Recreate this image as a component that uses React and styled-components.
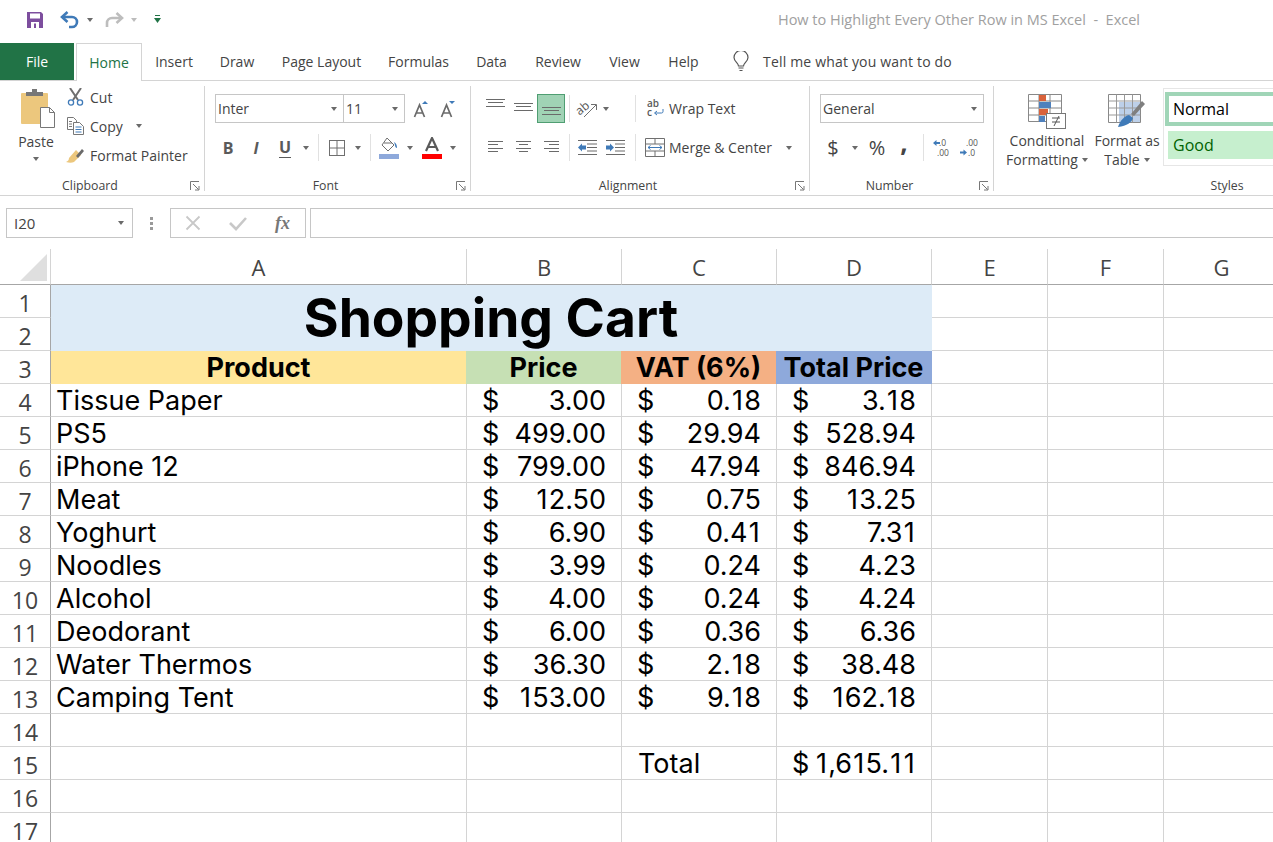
import React from 'react';
import styled, { createGlobalStyle } from 'styled-components';

const GlobalStyle = createGlobalStyle`
  html, body { margin: 0; padding: 0; background: #fff; }
  body { width: 1273px; height: 842px; overflow: hidden; font-family: "Open Sans", "Noto Sans", sans-serif; color: #444; }
`;

const Page = styled.div`
  width: 1273px;
  height: 842px;
  display: flex;
  flex-direction: column;
  overflow: hidden;
  & > * { flex: none; }
`;

/* title bar */
const TitleBar = styled.div`
  height: 43px;
  display: flex;
  align-items: center;
  justify-content: space-between;
  padding: 0 133px 4px 0;
  box-sizing: border-box;
`;
const QuickAccess = styled.div`
  display: flex;
  align-items: center;
  padding-left: 26px;
`;
const WindowTitle = styled.div`
  font-size: 14.5px;
  color: #a0a0a0;
  white-space: pre;
`;

/* tabs */
const TabBar = styled.div`
  height: 37px;
  display: flex;
  align-items: flex-start;
  border-bottom: 1px solid #d4d4d4;
  font-size: 14px;
`;
const FileTab = styled.div`
  width: 74px;
  height: 37px;
  margin-right: 2px;
  background: #217346;
  color: #fff;
  display: flex;
  align-items: center;
  justify-content: center;
`;
const Tab = styled.div`
  width: ${p => p.$w}px;
  height: 37px;
  display: flex;
  align-items: center;
  justify-content: center;
  white-space: nowrap;
  box-sizing: border-box;
  color: ${p => (p.$active ? '#217346' : '#444')};
  background: #fff;
  ${p => p.$active && `
    height: 38px;
    border: 1px solid #d4d4d4;
    border-bottom: none;
    z-index: 1;
  `}
`;
const TellMe = styled.div`
  height: 37px;
  display: flex;
  align-items: center;
  gap: 14px;
  margin-left: 20px;
  color: #444;
  white-space: nowrap;
  letter-spacing: 0.18px;
`;

/* ribbon */
const Ribbon = styled.div`
  height: 109px;
  display: flex;
  align-items: flex-start;
  padding-top: 5px;
  border-bottom: 1px solid #d4d4d4;
  font-size: 14px;
`;
const Group = styled.div`
  width: ${p => p.$w}px;
  height: 105px;
  display: grid;
  grid-template-rows: 87px 18px;
  flex: none;
  box-sizing: border-box;
  border-right: ${p => (p.$last ? 'none' : '1px solid #d4d4d4')};
`;
const GroupBody = styled.div`
  min-width: 0;
  padding: ${p => p.$pad || '8px 0 0 10px'};
  display: flex;
  flex-direction: ${p => (p.$row ? 'row' : 'column')};
  gap: ${p => (p.$row ? 0 : 10)}px;
`;
const GroupFooter = styled.div`
  display: grid;
  grid-template-columns: 1fr auto 1fr 20px;
  align-items: center;
  font-size: 12.3px;
  padding: 6px 4px 0 ${p => p.$pl || 0}px;
  color: #444;
`;
const GroupName = styled.span`
  grid-column: 2;
  line-height: 14px;
`;
const Launcher = styled.span`
  grid-column: 4;
  justify-self: end;
  display: flex;
`;
const ToolRow = styled.div`
  display: flex;
  align-items: center;
  height: 29px;
  font-size: ${p => (p.$big ? '20px' : 'inherit')};
`;
const Slot = styled.span`
  flex: none;
  width: ${p => p.$w}px;
  margin-left: ${p => p.$ml || 0}px;
  height: 29px;
  display: flex;
  align-items: ${p => (p.$pt !== undefined ? 'flex-start' : 'center')};
  justify-content: center;
  box-sizing: border-box;
  padding-top: ${p => p.$pt || 0}px;
  ${p => p.$active && 'background: #a0d3b5; border: 1px solid #4f9e72;'}
`;
const FontLetter = styled.span`
  font-size: 16px;
  line-height: 20px;
  font-weight: 700;
  color: #5a5a5a;
  font-style: ${p => (p.$italic ? 'italic' : 'normal')};
  border-bottom: ${p => (p.$under ? '1.500px solid #5a5a5a' : 'none')};
`;
const CommaGlyph = styled.span`
  font-size: 26px;
  font-weight: 700;
  line-height: 20px;
  margin-bottom: 12px;
`;
const ToolSep = styled.span`
  flex: none;
  width: 1px;
  height: 27px;
  margin-left: ${p => p.$ml}px;
  background: #e1e1e1;
`;
const Caret = styled.i`
  display: block;
  flex: none;
  width: 0;
  height: 0;
  margin-left: ${p => p.$ml || 0}px;
  margin-top: ${p => p.$mt || 0}px;
  opacity: ${p => (p.$faint ? 0.45 : 1)};
  border-left: 3.5px solid transparent;
  border-right: 3.5px solid transparent;
  border-top: 4px solid #6a6a6a;
`;
const Combo = styled.div`
  width: ${p => p.$w}px;
  height: 29px;
  flex: none;
  box-sizing: border-box;
  border: 1px solid #c6c6c6;
  margin-left: ${p => p.$ml || 0}px;
  padding: 0 6px 0 2px;
  display: flex;
  align-items: center;
  justify-content: space-between;
  font-size: 14px;
  color: #444;
`;
const TextTool = styled.span`
  display: flex;
  align-items: center;
  white-space: nowrap;
  margin-left: ${p => p.$ml || 0}px;
  gap: 4px;
`;

/* clipboard */
const PasteButton = styled.div`
  width: 56px;
  flex: none;
  padding-top: 3px;
  display: flex;
  flex-direction: column;
  align-items: center;
  padding-left: 8px;
  svg { margin-left: 5px; }
`;
const PasteLabel = styled.span`
  margin-top: 3px;
  line-height: 19px;
`;
const ClipList = styled.div`
  display: flex;
  flex-direction: column;
  gap: 5px;
  margin: -1px 0 0 2px;
`;
const ClipItem = styled.div`
  height: 24px;
  display: flex;
  align-items: center;
  gap: 5px;
  white-space: nowrap;
`;
const ClipIcon = styled.span`
  width: 19px;
  display: flex;
  justify-content: center;
`;

/* styles */
const BigCommand = styled.div`
  width: ${p => p.$w}px;
  flex: none;
  padding-top: 8px;
  display: flex;
  flex-direction: column;
  align-items: center;
  text-align: center;
  line-height: 19px;
  white-space: nowrap;
`;
const CommandLine = styled.span`
  display: flex;
  align-items: center;
  gap: 4px;
`;
const CommandIcon = styled.span`
  height: 37px;
  display: flex;
`;
const Gallery = styled.div`
  flex: 1;
  margin: 2px 0 0 6px;
  height: 78px;
  border: 1px solid #e6e6e6;
  border-right: none;
  box-sizing: border-box;
  padding: 3px 0 0 1px;
  display: flex;
  flex-direction: column;
  gap: 5px;
`;
const NormalStyle = styled.div`
  height: 34px;
  box-sizing: border-box;
  border: 4px solid #a0d5b7;
  border-right: none;
  padding-left: 4px;
  display: flex;
  align-items: center;
  font-size: 16px;
  color: #000;
`;
const GoodStyle = styled.div`
  height: 28px;
  margin-left: 3px;
  padding-left: 5px;
  background: #c6efce;
  color: #006100;
  display: flex;
  align-items: center;
  font-size: 16px;
`;

/* formula bar */
const FormulaBar = styled.div`
  height: 30px;
  margin: 12px 0 11px;
  padding-left: 6px;
  display: flex;
  align-items: stretch;
`;
const NameBox = styled.div`
  width: 127px;
  box-sizing: border-box;
  border: 1px solid #c6c6c6;
  padding: 0 8px 0 7px;
  display: flex;
  align-items: center;
  justify-content: space-between;
  font-size: 15px;
`;
const GripDots = styled.div`
  width: 37px;
  display: flex;
  flex-direction: column;
  align-items: center;
  justify-content: center;
  gap: 2px;
  i { width: 3px; height: 3px; background: #9a9a9a; display: block; }
`;
const FxBox = styled.div`
  width: 136px;
  box-sizing: border-box;
  border: 1px solid #c6c6c6;
  display: grid;
  grid-template-columns: 44px 45px 45px;
  place-items: center;
`;
const FormulaInput = styled.div`
  flex: 1;
  margin-left: 4px;
  border: 1px solid #c6c6c6;
  border-right: none;
`;
const FxLabel = styled.span`
  font: italic 700 18px "Liberation Serif", serif;
  color: #777;
`;

/* sheet */
const Sheet = styled.div`
  display: grid;
  grid-template-columns: 51px 416px 155px 155px 155px 116px 116px 116px;
  grid-template-rows: 36px repeat(17, 33px);
  font-family: Inter, "Liberation Sans", sans-serif;
  color: #000;
`;
const Corner = styled.div`
  border-right: 1px solid #d4d4d4;
  border-bottom: 1px solid #a6a6a6;
  position: relative;
  &::after {
    content: '';
    position: absolute;
    right: 3px;
    bottom: 3px;
    width: 27px;
    height: 27px;
    background: #dfdfdf;
    clip-path: polygon(100% 0, 100% 100%, 0 100%);
  }
`;
const ColHead = styled.div`
  border-right: 1px solid #d4d4d4;
  border-bottom: 1px solid #a6a6a6;
  display: flex;
  align-items: center;
  justify-content: center;
  font: 22px "Open Sans", sans-serif;
  color: #444;
`;
const RowHead = styled.div`
  border-right: 1px solid #a6a6a6;
  border-bottom: 1px solid #d4d4d4;
  display: flex;
  align-items: center;
  justify-content: center;
  padding-top: 3px;
  font: 23px "Open Sans", sans-serif;
  color: #444;
`;
const Cell = styled.div`
  box-sizing: border-box;
  min-width: 0;
  border-right: 1px solid #d4d4d4;
  border-bottom: 1px solid #d4d4d4;
  display: flex;
  align-items: flex-end;
  line-height: 31px;
  font-size: 27px;
  padding: 0 5px;
  white-space: nowrap;
`;
const TitleCell = styled(Cell)`
  grid-column: 2 / span 4;
  grid-row: 2 / span 2;
  background: #ddebf7;
  border-color: transparent;
  align-items: center;
  justify-content: center;
  font-size: 53.3px;
  font-weight: 700;
  padding: 0;
`;
const HeadCell = styled(Cell)`
  background: ${p => p.$bg};
  border-color: transparent;
  justify-content: center;
  font-weight: 700;
  padding: 0;
  margin-left: ${p => (p.$flush ? -1 : 0)}px;
`;
const MoneyCell = styled(Cell)`
  justify-content: space-between;
  padding: 0 15px 0 15px;
`;
const TotalLabel = styled(Cell)`
  padding-left: 16px;
`;
const WideOne = styled.span`
  padding: 0 1.25px;
`;

const stroke = '#6a6a6a';

const SaveIcon = () => (
  <svg width="18" height="18" viewBox="0 0 18 18">
    <path d="M1 1h14l2 2v14H1z" fill="#7d4e9e" />
    <rect x="4" y="2.500" width="10" height="5" fill="#fff" />
    <rect x="5" y="11" width="8" height="6" fill="#fff" />
    <rect x="8" y="12.500" width="2" height="4.500" fill="#7d4e9e" />
  </svg>
);
const UndoIcon = ({ color }) => (
  <svg width="20" height="18" viewBox="0 0 20 18" fill="none">
    <path d="M3 6h9a5 5 0 0 1 5 5v0a5 5 0 0 1-5 5H9" stroke={color} strokeWidth="2.600" />
    <path d="M7.500 1 2 6l5.500 5" stroke={color} strokeWidth="2.600" />
  </svg>
);
const RedoIcon = ({ color }) => (
  <svg width="20" height="16" viewBox="0 0 20 16" fill="none">
    <path d="M17 6H8a5 5 0 0 0-5 5v4" stroke={color} strokeWidth="2.600" />
    <path d="M12.500 1 18 6l-5.500 5" stroke={color} strokeWidth="2.600" />
  </svg>
);
const CustomizeIcon = () => (
  <svg width="7" height="9" viewBox="0 0 7 9">
    <rect x="1" y="0" width="5" height="1" fill="#217346" />
    <path d="M0 3h7L3.500 8z" fill="#217346" />
  </svg>
);
const BulbIcon = () => (
  <svg width="16" height="21" viewBox="0 0 16 21" fill="none" stroke="#555" strokeWidth="1.200">
    <path d="M5.500 15c0-3-4.500-4.500-4.500-8.500a7 7 0 0 1 14 0c0 4-4.500 5.500-4.500 8.500z" />
    <path d="M5.500 17h5M6.500 19.500h3" />
  </svg>
);
const PasteIcon = () => (
  <svg width="35" height="40" viewBox="0 0 35 40">
    <rect x="0" y="4" width="27" height="31" rx="1" fill="#ecc77d" />
    <path d="M5 7V3h6V0h5v3h6v4z" fill="#777" />
    <path d="M19.500 18.500h9l5 5v15h-14z" fill="#fff" stroke="#777" />
    <path d="M28.500 18.500v5h5" fill="none" stroke="#777" />
  </svg>
);
const CutIcon = () => (
  <svg width="17" height="18" viewBox="0 0 17 18" fill="none">
    <path d="M3 0l8 12M14 0L6 12" stroke="#6f6f6f" strokeWidth="2" />
    <circle cx="4" cy="14.500" r="2.600" stroke="#3f7ab8" strokeWidth="1.300" />
    <circle cx="13" cy="14.500" r="2.600" stroke="#3f7ab8" strokeWidth="1.300" />
  </svg>
);
const CopyIcon = () => (
  <svg width="17" height="18" viewBox="0 0 17 18" fill="#fff">
    <path d="M.5.5h6l3 3v9h-9z" stroke="#777" />
    <path d="M6.500 5.500h6l4 4v8h-10z" stroke="#777" />
    <path d="M8.500 10h6M8.500 12.500h6M8.500 15h6" stroke="#3f7ab8" />
    <path d="M2 4.500h3M2 7h3M2 9.500h3" stroke="#777" />
  </svg>
);
const PainterIcon = () => (
  <svg width="19" height="16" viewBox="0 0 19 16">
    <path d="M10 3l5 5-4 4-3 3c-2 1-5 1-8 0 2-1 3-2 3-4z" fill="#ecc77d" />
    <path d="M10 9l6-7 2 2-6 7z" fill="#6a6a6a" />
  </svg>
);
const GrowFont = ({ up }) => (
  <svg width="16" height="18" viewBox="0 0 16 18">
    <path d="M1.500 17 6.500 5l5 12M3.500 13h6" fill="none" stroke="#6a6a6a" strokeWidth="1.700" />
    {up
      ? <path d="M9 4l3-3 3 3z" fill="#3f7ab8" />
      : <path d="M9 1h6l-3 3z" fill="#3f7ab8" />}
  </svg>
);
const BorderIcon = () => (
  <svg width="18" height="18" viewBox="0 0 18 18" fill="none" stroke="#6f6f6f">
    <rect x="1.500" y="1.500" width="15" height="15" />
    <path d="M9 1.500v15M1.500 9h15" />
  </svg>
);
const FillIcon = () => (
  <svg width="20" height="22" viewBox="0 0 20 22">
    <path d="M8 1l7 7-6 6-6-6z" fill="#fff" stroke="#6f6f6f" />
    <path d="M5 6h8" stroke="#6f6f6f" />
    <path d="M15 5c2 1 3 3 3 6-1 0-2-1-2-3z" fill="#3f7ab8" />
    <rect x="0" y="17" width="20" height="5" fill="#8ea9db" />
  </svg>
);
const FontColorIcon = () => (
  <svg width="20" height="22" viewBox="0 0 20 22">
    <path d="M4 14 10 1l6 13M6 10h8" fill="none" stroke="#5a5a5a" strokeWidth="2.200" />
    <rect x="0" y="17" width="20" height="5" fill="#ff0000" />
  </svg>
);
const LauncherIcon = () => (
  <svg width="10" height="10" viewBox="0 0 10 10" fill="none" stroke="#777">
    <path d="M.5 9V.5H9" />
    <path d="M3 3l5.500 5.500M5 9h4V5" />
  </svg>
);
const LinesIcon = ({ rows }) => (
  <svg width="19" height="16" viewBox="0 0 19 16" stroke={stroke}>
    {rows.map((r, i) => (
      <path key={i} d={`M${r[0]} ${Math.floor(i * 3.5) + 1.5}H${r[1]}`} />
    ))}
  </svg>
);
const OrientIcon = () => (
  <svg width="20" height="18" viewBox="0 0 20 18" fill="none" stroke="#6f6f6f" overflow="visible">
    <path d="M7 17 19 5M14 4.500h5.500V10" />
    <text x="-1" y="12" fontSize="12" fill="#555" stroke="none" transform="rotate(-40 6 9)" fontFamily="Open Sans">ab</text>
  </svg>
);
const IndentIcon = ({ out }) => (
  <svg width="19" height="16" viewBox="0 0 19 16">
    <path d="M0 .5h19M9 4h10M9 7.500h10M9 11h10M0 14.500h19" stroke={stroke} />
    <path d={out ? 'M4 3.500v2h4v4H4v2l-4-4z' : 'M4 3.500v2H0v4h4v2l4-4z'} fill="#3f7ab8" />
  </svg>
);
const WrapIcon = () => (
  <svg width="18" height="17" viewBox="0 0 18 17" overflow="visible">
    <text fontSize="10" fontWeight="600" fontFamily="Open Sans" fill="#5a5a5a">
      <tspan x="0" y="7">ab</tspan>
      <tspan x="0" y="16">c</tspan>
    </text>
    <path d="M16 9v2.500a1.500 1.500 0 0 1-1.500 1.500H8M10 11l-2.500 2 2.500 2" fill="none" stroke="#3f7ab8" />
  </svg>
);
const MergeIcon = () => (
  <svg width="20" height="19" viewBox="0 0 20 19" fill="none">
    <path d="M.5.5h19v18H.5zM.5 6h19M.5 13h19M10 .5V6M10 13v5.500" stroke="#6f6f6f" />
    <path d="M3 9.500h14M5.500 7.500l-2.500 2 2.500 2M14.500 7.500l2.500 2-2.500 2" stroke="#3f7ab8" />
  </svg>
);
const DecimalIcon = ({ up }) => (
  <svg width="18" height="19" viewBox="0 0 18 19" overflow="visible">
    <text fontSize="8.500" fontFamily="Open Sans" fill="#555">
      <tspan x="6" y="8">{up ? '.0' : '.00'}</tspan>
      <tspan x={up ? 4 : 8} y="18">{up ? '.00' : '.0'}</tspan>
    </text>
    <path d={up ? 'M0 5l3.500-3v2H7v2H3.500v2z' : 'M7 14.500l-3.500-3v2H0v2h3.500v2z'} fill="#3f7ab8" />
  </svg>
);
const CondFormatIcon = () => (
  <svg width="38" height="35" viewBox="0 0 38 35">
    <path d="M.5.5h33v27H.5zM.5 7h33M.5 14h33M.5 21h33M11 .5v27M22 .5v27" fill="#fff" stroke="#888" />
    <rect x="11" y="1" width="7" height="6" fill="#d9623b" />
    <rect x="11" y="8" width="12" height="6" fill="#4f81bd" />
    <rect x="11" y="15" width="9" height="6" fill="#d9623b" />
    <rect x="11" y="22" width="6" height="6" fill="#4f81bd" />
    <rect x="18.500" y="19.500" width="19" height="15" fill="#fff" stroke="#777" />
    <path d="M24 24h8M24 28h8M31 22l-5 10" stroke="#555" fill="none" />
  </svg>
);
const TableFormatIcon = () => (
  <svg width="38" height="35" viewBox="0 0 38 35">
    <path d="M.5.5h32v28H.5z" fill="#fff" stroke="#888" />
    <rect x="11" y="8" width="21" height="20" fill="#bdd0e9" />
    <path d="M.5 7h32M.5 14h32M.5 21h32M8.500.5v28M16.500.5v28M24.500.5v28" stroke="#999" fill="none" />
    <path d="M23 20 34 7l3 3-11 12z" fill="#7f7f7f" />
    <path d="M10 33c2-6 6-11 11-12l4 3c-1 4-6 8-15 9z" fill="#3f7ab8" />
  </svg>
);
const CancelIcon = () => (
  <svg width="16" height="16" viewBox="0 0 16 16" stroke="#c8c8c8" strokeWidth="1.800" fill="none">
    <path d="M1.500 1.500l13 13M14.500 1.500l-13 13" />
  </svg>
);
const EnterIcon = () => (
  <svg width="18" height="15" viewBox="0 0 18 15" stroke="#c8c8c8" strokeWidth="2.600" fill="none">
    <path d="M1 7l6 6L17 2" />
  </svg>
);

const products = [
  ['Tissue Paper', '3.00', '0.18', '3.18'],
  ['PS5', '499.00', '29.94', '528.94'],
  ['iPhone 12', '799.00', '47.94', '846.94'],
  ['Meat', '12.50', '0.75', '13.25'],
  ['Yoghurt', '6.90', '0.41', '7.31'],
  ['Noodles', '3.99', '0.24', '4.23'],
  ['Alcohol', '4.00', '0.24', '4.24'],
  ['Deodorant', '6.00', '0.36', '6.36'],
  ['Water Thermos', '36.30', '2.18', '38.48'],
  ['Camping Tent', '153.00', '9.18', '162.18'],
];

const tabs = [
  ['Insert', 64], ['Draw', 62], ['Page Layout', 107], ['Formulas', 87], ['Data', 59],
  ['Review', 74], ['View', 59], ['Help', 59],
];

const threeLines = [[0, 19], [2, 17], [0, 19]];

// the 1 in the reference's Inter is wider than the installed one
const Money = ({ value }) => (
  <MoneyCell>
    <span>$</span>
    <span>
      {value.split(/(1)/).map((part, i) => (part === '1' ? <WideOne key={i}>1</WideOne> : part))}
    </span>
  </MoneyCell>
);

const Blanks = ({ count }) => Array.from({ length: count }, (_, i) => <Cell key={i} />);

const GroupTail = ({ name }) => (
  <GroupFooter>
    <GroupName>{name}</GroupName>
    <Launcher><LauncherIcon /></Launcher>
  </GroupFooter>
);

export default function App() {
  return (
    <Page>
      <GlobalStyle />
      <TitleBar>
        <QuickAccess>
          <SaveIcon />
          <Slot $w={20} $ml={16}><UndoIcon color="#3f7ab8" /></Slot>
          <Caret $ml={7} />
          <Slot $w={20} $ml={11}><RedoIcon color="#bdbdbd" /></Slot>
          <Caret $ml={7} $faint />
          <Slot $w={7} $ml={17}><CustomizeIcon /></Slot>
        </QuickAccess>
        <WindowTitle>How to Highlight Every Other Row in MS Excel  -  Excel</WindowTitle>
      </TitleBar>

      <TabBar>
        <FileTab>File</FileTab>
        <Tab $active $w={66}>Home</Tab>
        {tabs.map(([label, w]) => <Tab key={label} $w={w}>{label}</Tab>)}
        <TellMe><BulbIcon />Tell me what you want to do</TellMe>
      </TabBar>

      <Ribbon>
        <Group $w={205}>
          <GroupBody $row $pad="0">
            <PasteButton>
              <PasteIcon />
              <PasteLabel>Paste</PasteLabel>
              <Caret $mt={6} />
            </PasteButton>
            <ClipList>
              <ClipItem><ClipIcon><CutIcon /></ClipIcon>Cut</ClipItem>
              <ClipItem><ClipIcon><CopyIcon /></ClipIcon>Copy<Caret $ml={8} /></ClipItem>
              <ClipItem><ClipIcon><PainterIcon /></ClipIcon>Format Painter</ClipItem>
            </ClipList>
          </GroupBody>
          <GroupTail name="Clipboard" />
        </Group>

        <Group $w={266}>
          <GroupBody>
            <ToolRow>
              <Combo $w={129}>Inter<Caret /></Combo>
              <Combo $w={62} $ml={-1}>11<Caret /></Combo>
              <Slot $w={22} $ml={5}><GrowFont up /></Slot>
              <Slot $w={22} $ml={5}><GrowFont /></Slot>
            </ToolRow>
            <ToolRow>
              <Slot $w={26}><FontLetter>B</FontLetter></Slot>
              <Slot $w={30}><FontLetter $italic>I</FontLetter></Slot>
              <Slot $w={28}><FontLetter $under>U</FontLetter></Slot>
              <Slot $w={14}><Caret /></Slot>
              <ToolSep $ml={5} />
              <Slot $w={28} $ml={4}><BorderIcon /></Slot>
              <Slot $w={14}><Caret /></Slot>
              <ToolSep $ml={5} />
              <Slot $w={28} $ml={4}><FillIcon /></Slot>
              <Slot $w={14}><Caret /></Slot>
              <Slot $w={28} $ml={1}><FontColorIcon /></Slot>
              <Slot $w={14}><Caret /></Slot>
            </ToolRow>
          </GroupBody>
          <GroupTail name="Font" />
        </Group>

        <Group $w={339}>
          <GroupBody>
            <ToolRow>
              <Slot $w={28} $pt={4}><LinesIcon rows={threeLines} /></Slot>
              <Slot $w={28} $pt={8}><LinesIcon rows={threeLines} /></Slot>
              <Slot $w={28} $pt={11} $active><LinesIcon rows={threeLines} /></Slot>
              <ToolSep $ml={4} />
              <Slot $w={28} $ml={3}><OrientIcon /></Slot>
              <Slot $w={10}><Caret /></Slot>
              <ToolSep $ml={24} />
              <TextTool $ml={11}><WrapIcon />Wrap Text</TextTool>
            </ToolRow>
            <ToolRow>
              <Slot $w={28}><LinesIcon rows={[[2, 17], [2, 12], [2, 17], [2, 12]]} /></Slot>
              <Slot $w={28}><LinesIcon rows={[[2, 17], [5, 14], [2, 17], [5, 14]]} /></Slot>
              <Slot $w={28}><LinesIcon rows={[[2, 17], [7, 17], [2, 17], [7, 17]]} /></Slot>
              <ToolSep $ml={4} />
              <Slot $w={28} $ml={3}><IndentIcon out /></Slot>
              <Slot $w={28}><IndentIcon /></Slot>
              <ToolSep $ml={6} />
              <TextTool $ml={9}><MergeIcon />Merge &amp; Center<Caret $ml={10} /></TextTool>
            </ToolRow>
          </GroupBody>
          <GroupTail name="Alignment" />
        </Group>

        <Group $w={184}>
          <GroupBody>
            <ToolRow>
              <Combo $w={164}>General<Caret /></Combo>
            </ToolRow>
            <ToolRow $big>
              <Slot $w={26}>$</Slot>
              <Slot $w={18}><Caret /></Slot>
              <Slot $w={26}>%</Slot>
              <Slot $w={28}><CommaGlyph>,</CommaGlyph></Slot>
              <ToolSep $ml={5} />
              <Slot $w={28} $ml={4}><DecimalIcon up /></Slot>
              <Slot $w={28} $ml={-1}><DecimalIcon /></Slot>
            </ToolRow>
          </GroupBody>
          <GroupTail name="Number" />
        </Group>

        <Group $w={279} $last>
          <GroupBody $row $pad="0 0 0 3px">
            <BigCommand $w={100}>
              <CommandIcon><CondFormatIcon /></CommandIcon>
              <span>Conditional</span>
              <CommandLine>Formatting<Caret /></CommandLine>
            </BigCommand>
            <BigCommand $w={60}>
              <CommandIcon><TableFormatIcon /></CommandIcon>
              <span>Format as</span>
              <CommandLine>Table<Caret /></CommandLine>
            </BigCommand>
            <Gallery>
              <NormalStyle>Normal</NormalStyle>
              <GoodStyle>Good</GoodStyle>
            </Gallery>
          </GroupBody>
          <GroupFooter $pl={211}>
            <GroupName>Styles</GroupName>
          </GroupFooter>
        </Group>
      </Ribbon>

      <FormulaBar>
        <NameBox>I20<Caret /></NameBox>
        <GripDots><i /><i /><i /></GripDots>
        <FxBox>
          <CancelIcon />
          <EnterIcon />
          <FxLabel>fx</FxLabel>
        </FxBox>
        <FormulaInput />
      </FormulaBar>

      <Sheet>
        <Corner />
        {['A', 'B', 'C', 'D', 'E', 'F', 'G'].map(c => <ColHead key={c}>{c}</ColHead>)}

        <RowHead>1</RowHead>
        <TitleCell>Shopping Cart</TitleCell>
        <Blanks count={3} />
        <RowHead>2</RowHead>
        <Blanks count={3} />

        <RowHead>3</RowHead>
        <HeadCell $bg="#ffe699">Product</HeadCell>
        <HeadCell $flush $bg="#c6e0b4">Price</HeadCell>
        <HeadCell $flush $bg="#f4b084">VAT (6%)</HeadCell>
        <HeadCell $flush $bg="#8ea9db">Total Price</HeadCell>
        <Blanks count={3} />

        {products.map(([name, price, vat, total], i) => (
          <React.Fragment key={name}>
            <RowHead>{i + 4}</RowHead>
            <Cell>{name}</Cell>
            <Money value={price} />
            <Money value={vat} />
            <Money value={total} />
            <Blanks count={3} />
          </React.Fragment>
        ))}

        <RowHead>14</RowHead>
        <Blanks count={7} />
        <RowHead>15</RowHead>
        <Blanks count={2} />
        <TotalLabel>Total</TotalLabel>
        <Money value="1,615.11" />
        <Blanks count={3} />
        <RowHead>16</RowHead>
        <Blanks count={7} />
        <RowHead>17</RowHead>
        <Blanks count={7} />
      </Sheet>
    </Page>
  );
}
